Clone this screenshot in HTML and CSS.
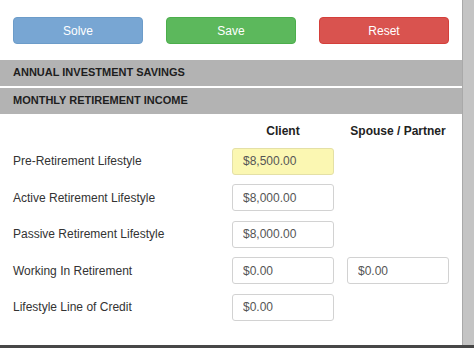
FILE: index.html
```html
<!DOCTYPE html>
<html>
	<head>
		<meta charset="UTF-8">
		<title>Retirement Income</title>
		<link rel="stylesheet" href="styles.css">
	</head>
	<body>
		<div class="page">
			<div class="main">
				<div class="buttons">
					<button class="btn btn_solve">Solve</button>
					<button class="btn btn_save">Save</button>
					<button class="btn btn_reset">Reset</button>
				</div>
				<div class="section">Annual Investment Savings</div>
				<div class="section">Monthly Retirement Income</div>
				<div class="income">
					<div></div>
					<div class="col_head">Client</div>
					<div class="col_head">Spouse / Partner</div>

					<div class="label">Pre-Retirement Lifestyle</div>
					<input class="field field_active" type="text" value="$8,500.00">
					<div></div>

					<div class="label">Active Retirement Lifestyle</div>
					<input class="field" type="text" value="$8,000.00">
					<div></div>

					<div class="label">Passive Retirement Lifestyle</div>
					<input class="field" type="text" value="$8,000.00">
					<div></div>

					<div class="label">Working In Retirement</div>
					<input class="field" type="text" value="$0.00">
					<input class="field" type="text" value="$0.00">

					<div class="label">Lifestyle Line of Credit</div>
					<input class="field" type="text" value="$0.00">
					<div></div>
				</div>
			</div>
			<div class="scroll"></div>
		</div>
		<div class="bottom_bar"></div>
	</body>
</html>
```

FILE: styles.css
```css
*{
	margin: 0;
	padding: 0;
	box-sizing: border-box;
}
html,body{
	width: 474px;
	height: 348px;
	overflow: hidden;
	background: #fff;
	font-family: "Liberation Sans", Arial, sans-serif;
}
.page{
	display: flex;
	height: 345px;
}
.main{
	width: 462px;
	background: #fff;
}
.scroll{
	width: 12px;
	background: #c4c4c4;
	border-left: 1px solid #a9a9a9;
}
.bottom_bar{
	height: 3px;
	background: #474747;
}
.buttons{
	display: grid;
	grid-template-columns: repeat(3, 130px);
	column-gap: 23px;
	padding: 17px 0 0 13px;
}
.btn{
	height: 27px;
	border: 1px solid transparent;
	border-radius: 4px;
	color: #fff;
	font-family: inherit;
	font-size: 12px;
}
.btn_solve{
	background: #78a6d3;
	border-color: #6c9cc9;
}
.btn_save{
	background: #5cb85c;
	border-color: #4cae4c;
}
.btn_reset{
	background: #d9534f;
	border-color: #d43f3a;
}
.section{
	height: 26px;
	line-height: 25px;
	margin-top: 2px;
	padding-left: 13px;
	background: #b3b3b3;
	color: #1e1e1e;
	font-size: 11px;
	font-weight: bold;
	text-transform: uppercase;
}
.buttons + .section{
	margin-top: 16px;
}
.income{
	display: grid;
	grid-template-columns: 219px 102px 102px;
	column-gap: 13px;
	row-gap: 9.5px;
	align-items: center;
	padding-top: 10px;
}
.col_head{
	text-align: center;
	font-size: 12px;
	font-weight: bold;
	line-height: 14px;
	color: #222;
}
.label{
	padding-left: 13px;
	font-size: 12px;
	color: #333;
}
.field{
	width: 102px;
	height: 27px;
	padding: 0 10px;
	border: 1px solid #d2d2d2;
	border-radius: 3px;
	background: #fff;
	color: #555;
	font-family: inherit;
	font-size: 12px;
	outline: none;
}
.field_active{
	background: #fbf7b2;
	border-color: #e4e0a6;
}
```
